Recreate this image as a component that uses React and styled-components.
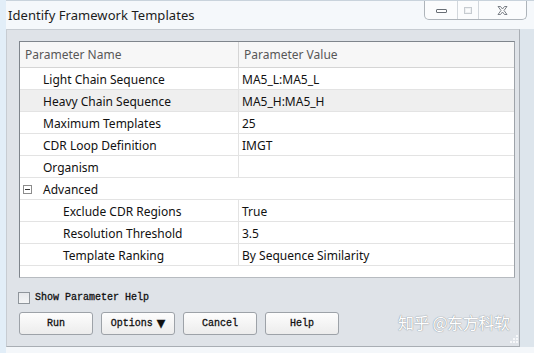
import React from "react";
import styled, { createGlobalStyle } from "styled-components";

const rows = [
  { name: "Light Chain Sequence", value: "MA5_L:MA5_L", level: 1 },
  { name: "Heavy Chain Sequence", value: "MA5_H:MA5_H", level: 1, selected: true },
  { name: "Maximum Templates", value: "25", level: 1 },
  { name: "CDR Loop Definition", value: "IMGT", level: 1 },
  { name: "Organism", value: "", level: 1 },
  { name: "Advanced", group: true },
  { name: "Exclude CDR Regions", value: "True", level: 2 },
  { name: "Resolution Threshold", value: "3.5", level: 2 },
  { name: "Template Ranking", value: "By Sequence Similarity", level: 2 },
];

const gripDots = [
  [8, 0], [8, 3], [5, 3], [8, 6], [5, 6], [2, 6],
];

export default function App() {
  return (
    <>
      <GlobalStyle />
      <Window>
        <TitleBar>
          <Title>Identify Framework Templates</Title>
          <Caption>
            <CapButton w={33}>
              <MinIcon />
            </CapButton>
            <CapButton w={21}>
              <MaxIcon />
            </CapButton>
            <CapButton w={47} last>
              <svg width="11" height="9" viewBox="0 0 11 9">
                <path
                  d="M1 0.5 H3.5 L5.5 3 L7.5 0.5 H10 L7 4.5 L10 8.5 H7.5 L5.5 6 L3.5 8.5 H1 L4 4.5 Z"
                  fill="#fdfdfd"
                  stroke="#6d737b"
                  strokeWidth="0.9"
                  strokeLinejoin="round"
                />
              </svg>
            </CapButton>
          </Caption>
        </TitleBar>

        <Body>
          <Panel>
            <Grid>
              <HeaderRow>
                <HeadCell>Parameter Name</HeadCell>
                <HeadCell>Parameter Value</HeadCell>
              </HeaderRow>
              {rows.map((r) =>
                r.group ? (
                  <GroupRow key={r.name}>
                    <Toggle>
                      <span />
                    </Toggle>
                    <GroupLabel>{r.name}</GroupLabel>
                  </GroupRow>
                ) : (
                  <Row key={r.name} selected={r.selected}>
                    <NameCell level={r.level}>{r.name}</NameCell>
                    <ValueCell>{r.value}</ValueCell>
                  </Row>
                )
              )}
            </Grid>

            <CheckRow>
              <CheckBox />
              <MonoLabel>Show Parameter Help</MonoLabel>
            </CheckRow>

            <Buttons>
              <Button>Run</Button>
              <Button>
                Options <Arrow>▼</Arrow>
              </Button>
              <Button>Cancel</Button>
              <Button>Help</Button>
            </Buttons>

            <Watermark>知乎 @东方科软</Watermark>
            <Grip>
              <svg width="10" height="10" viewBox="0 0 10 10">
                {gripDots.map(([x, y]) => (
                  <rect key={x + "-" + y} x={x} y={y} width="2" height="2" fill="#f7f8fa" />
                ))}
              </svg>
            </Grip>
          </Panel>
          <RightStrip />
        </Body>
      </Window>
    </>
  );
}

const GlobalStyle = createGlobalStyle`
  html, body {
    margin: 0;
    padding: 0;
    background: #f7f9fb;
  }
  * {
    box-sizing: border-box;
  }
`;

const Window = styled.div`
  width: 534px;
  height: 353px;
  background: #f4f7fa;
  border-left: 6px solid #e2eef8;
  font-family: "Noto Sans", "Open Sans", sans-serif;
  display: flex;
  flex-direction: column;
  overflow: hidden;
`;

const TitleBar = styled.div`
  height: 29px;
  display: flex;
  align-items: flex-start;
  justify-content: space-between;
  background: #f5f8fb;
  margin-left: -6px;
  border-top: 1px solid #c9d3dc;
`;

const Title = styled.div`
  padding: 5px 0 0 8px;
  font-size: 13px;
  color: #1c1c1c;
  letter-spacing: 0.05px;
`;

const Caption = styled.div`
  display: flex;
  height: 19px;
  margin-right: 7px;
  border: 1px solid #aeb4ba;
  border-top: none;
  border-radius: 0 0 5px 5px;
  background: #fbfcfd;
`;

const CapButton = styled.div`
  width: ${(p) => p.w}px;
  display: flex;
  align-items: center;
  justify-content: center;
  border-right: ${(p) => (p.last ? "none" : "1px solid #d2d7dc")};
`;

const MinIcon = styled.span`
  width: 11px;
  height: 4px;
  border: 1px solid #686e75;
  border-radius: 1px;
  background: #ffffff;
  margin-top: 2px;
`;

const MaxIcon = styled.span`
  width: 8px;
  height: 7px;
  border: 1px solid #c6cbd0;
  box-shadow: inset 0 0 0 1px #eef0f2;
`;

const Body = styled.div`
  flex: 1;
  display: flex;
  padding-bottom: 6px;
`;

const Panel = styled.div`
  position: relative;
  width: 514px;
  background: #dfe3e8;
  border: 1px solid #a9aeb4;
  border-left-color: #c7ccd2;
  border-top-color: #c7ccd2;
  padding: 11px 0 0 12px;
`;

const RightStrip = styled.div`
  flex: 1;
  background: #dde5ec;
`;

const Grid = styled.div`
  width: 496px;
  height: 237px;
  background: #ffffff;
  border: 1px solid #7f858c;
  border-right-color: #9ea3a9;
  border-bottom-color: #b7bbc0;
`;

const HeaderRow = styled.div`
  display: grid;
  grid-template-columns: 219px 1fr;
  height: 26px;
  border-bottom: 1px solid #d5d5d5;
  background: #f7f7f7;
`;

const HeadCell = styled.div`
  display: flex;
  align-items: center;
  padding-left: 5px;
  font-size: 12px;
  color: #575757;
  &:first-child {
    border-right: 1px solid #d5d5d5;
  }
`;

const Row = styled.div`
  display: grid;
  grid-template-columns: 219px 1fr;
  height: 22px;
  border-bottom: 1px solid #e3e3e3;
  background: ${(p) => (p.selected ? "#efefef" : "#ffffff")};
  font-size: 12px;
  color: #111;
`;

const NameCell = styled.div`
  display: flex;
  align-items: center;
  padding-top: 2px;
  padding-left: ${(p) => (p.level === 2 ? 43 : 23)}px;
  border-right: 1px solid #e3e3e3;
`;

const ValueCell = styled.div`
  display: flex;
  align-items: center;
  padding-top: 2px;
  padding-left: 3px;
`;

const GroupRow = styled.div`
  display: flex;
  align-items: center;
  height: 22px;
  padding-top: 2px;
  border-bottom: 1px solid #e3e3e3;
  font-size: 12px;
  color: #111;
`;

const Toggle = styled.div`
  width: 9px;
  height: 9px;
  margin-left: 3px;
  border: 1px solid #8c8c8c;
  display: flex;
  align-items: center;
  justify-content: center;
  & > span {
    width: 5px;
    height: 1px;
    background: #333;
  }
`;

const GroupLabel = styled.span`
  margin-left: 11px;
`;

const CheckRow = styled.div`
  display: flex;
  align-items: center;
  gap: 5px;
  margin: 13px 0 0 -1px;
  height: 13px;
`;

const CheckBox = styled.span`
  width: 12px;
  height: 12px;
  border: 1px solid #8f959b;
  background: linear-gradient(#e6e8eb, #f4f5f6);
`;

const MonoLabel = styled.span`
  font-family: "Liberation Mono", "DejaVu Sans Mono", monospace;
  font-size: 10px;
  color: #111;
  -webkit-text-stroke: 0.3px #111;
`;

const Buttons = styled.div`
  display: flex;
  gap: 8px;
  margin-top: 8px;
`;

const Button = styled.div`
  width: 74px;
  height: 23px;
  display: flex;
  align-items: center;
  justify-content: center;
  gap: 4px;
  border: 1px solid #9da2a8;
  border-radius: 3px;
  background: linear-gradient(#fdfdfd, #ececec);
  font-family: "Liberation Mono", "DejaVu Sans Mono", monospace;
  font-size: 10px;
  color: #111;
  -webkit-text-stroke: 0.3px #111;
`;

const Arrow = styled.span`
  font-family: "DejaVu Sans", sans-serif;
  font-size: 11px;
`;

const Watermark = styled.div`
  position: absolute;
  left: 391px;
  top: 280px;
  white-space: nowrap;
  font-family: "Noto Sans CJK SC", sans-serif;
  font-size: 16px;
  color: #ffffff;
  text-shadow: 0 0 1px #8f969d, 0 0 1px #8f969d;
  letter-spacing: -0.4px;
`;

const Grip = styled.div`
  position: absolute;
  right: 1px;
  bottom: 1px;
  display: flex;
`;
